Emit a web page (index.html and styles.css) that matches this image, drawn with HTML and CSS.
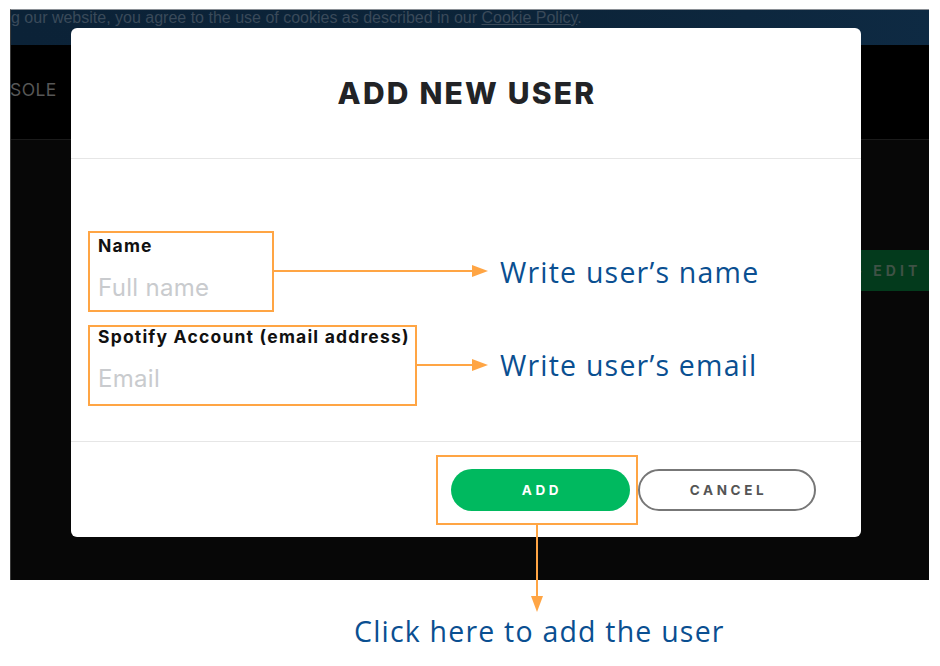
FILE: index.html
```html
<!DOCTYPE html>
<html lang="en">
<head>
<meta charset="utf-8">
<title>Add new user</title>
<link rel="stylesheet" href="styles.css">
</head>
<body>
<div class="shot">
  <div class="cookie">g our website, you agree to the use of cookies as described in our <span class="link">Cookie Policy</span>.</div>
  <div class="topbar"><span class="nav">SOLE</span></div>
  <div class="content">
    <div class="edit-btn">› EDIT SETTINGS</div>
  </div>

  <div class="modal">
    <div class="modal-head"><h1 class="title">ADD NEW USER</h1></div>
    <div class="modal-body">
      <div class="field">
        <label class="label">Name</label>
        <div class="input">Full name</div>
      </div>
      <div class="field">
        <label class="label">Spotify Account (email address)</label>
        <div class="input">Email</div>
      </div>
    </div>
    <div class="modal-foot">
      <button class="btn btn-add">ADD</button>
      <button class="btn btn-cancel">CANCEL</button>
    </div>
  </div>
</div>

<svg class="marks" width="940" height="666" viewBox="0 0 940 666">
  <g fill="none" stroke="#ffa544" stroke-width="2">
    <rect x="89" y="232" width="184" height="79"/>
    <rect x="89" y="326" width="327" height="79"/>
    <rect x="437" y="456" width="200" height="68"/>
    <line x1="274" y1="271" x2="474" y2="271"/>
    <line x1="417" y1="365" x2="474" y2="365"/>
    <line x1="537" y1="525" x2="537" y2="598"/>
  </g>
  <g fill="#ffa544">
    <polygon points="472,265 488,271 472,277"/>
    <polygon points="472,359 488,365 472,371"/>
    <polygon points="531,596 537,612 543,596"/>
  </g>
</svg>

<div class="note note-name">Write user’s name</div>
<div class="note note-email">Write user’s email</div>
<div class="note note-add">Click here to add the user</div>
</body>
</html>
```

FILE: styles.css
```css
* { box-sizing: border-box; }

html, body {
  margin: 0;
  padding: 0;
  background: #ffffff;
}

body {
  width: 940px;
  height: 666px;
  position: relative;
  overflow: hidden;
  font-family: "Inter", "Liberation Sans", sans-serif;
}

.shot {
  position: relative;
  margin: 9px 0 0 10px;
  width: 919px;
  height: 571px;
  background: #060606;
  overflow: hidden;
  border-top: 1px solid #8a8f95;
  border-left: 1px solid #3a3a3a;
  display: flex;
  flex-direction: column;
}

.cookie {
  height: 35px;
  flex: none;
  background: linear-gradient(90deg, #0b2237 0%, #0c2439 60%, #0e2a43 100%);
  color: #3a4a5a;
  font-family: "Liberation Sans", Arial, sans-serif;
  font-size: 16px;
  line-height: 16px;
  padding-top: 0;
  white-space: nowrap;
}

.cookie .link { text-decoration: underline; }

.topbar {
  height: 95px;
  flex: none;
  background: #000000;
  border-bottom: 1px solid #1b1b1b;
  display: flex;
  align-items: center;
  padding-bottom: 6px;
}

.nav {
  color: #575757;
  font-size: 17.5px;
  letter-spacing: 0.4px;
  margin-left: -1px;
}

.content {
  flex: 1;
  background: #070707;
  padding: 110px 0 0 820px;
}

.edit-btn {
  width: 220px;
  height: 41px;
  background: #033a1c;
  color: #3f5246;
  font-size: 14px;
  font-weight: 700;
  letter-spacing: 4px;
  line-height: 41px;
  padding-left: 25px;
  white-space: nowrap;
}

.modal {
  position: absolute;
  left: 60px;
  top: 18px;
  width: 790px;
  height: 509px;
  background: #ffffff;
  border-radius: 6px;
  display: flex;
  flex-direction: column;
}

.modal-head {
  height: 131px;
  flex: none;
  border-bottom: 1px solid #e6e6e6;
  display: flex;
  align-items: center;
  justify-content: center;
}

.title {
  margin: 0;
  font-size: 30px;
  font-weight: 800;
  letter-spacing: 2.2px;
  color: #222326;
  padding-left: 2px;
}

.modal-body {
  flex: 1;
  padding: 76px 0 0 27px;
  display: flex;
  flex-direction: column;
  gap: 16px;
}

.field {
  display: flex;
  flex-direction: column;
}

.label {
  font-size: 17.5px;
  font-weight: 700;
  line-height: 22px;
  letter-spacing: 1.2px;
  color: #111111;
}

.input {
  margin-top: 9px;
  height: 44px;
  line-height: 44px;
  font-size: 24px;
  font-weight: 400;
  letter-spacing: 0.3px;
  color: #c9cbce;
}

.modal-foot {
  height: 96px;
  flex: none;
  border-top: 1px solid #e6e6e6;
  display: flex;
  align-items: center;
  justify-content: flex-end;
  gap: 8px;
  padding: 0 45px 0 0;
}

.btn {
  height: 42px;
  width: 179px;
  border-radius: 21px;
  font-family: "Inter", "Liberation Sans", sans-serif;
  font-size: 13.5px;
  font-weight: 700;
  letter-spacing: 3.6px;
  padding: 0 0 0 3px;
  cursor: pointer;
}

.btn-add {
  background: #00b95f;
  border: none;
  color: #ffffff;
}

.btn-cancel {
  background: #ffffff;
  border: 2px solid #777777;
  color: #555555;
  width: 178px;
}

.marks {
  position: absolute;
  left: 0;
  top: 0;
}

.note {
  position: absolute;
  font-family: "Open Sans", "Noto Sans", sans-serif;
  font-size: 28.5px;
  line-height: 34px;
  letter-spacing: 1.2px;
  color: #0a4f91;
  white-space: nowrap;
}

.note-name { left: 500px; top: 255px; }
.note-email { left: 500px; top: 348px; }
.note-add { left: 354px; top: 614px; }
```
